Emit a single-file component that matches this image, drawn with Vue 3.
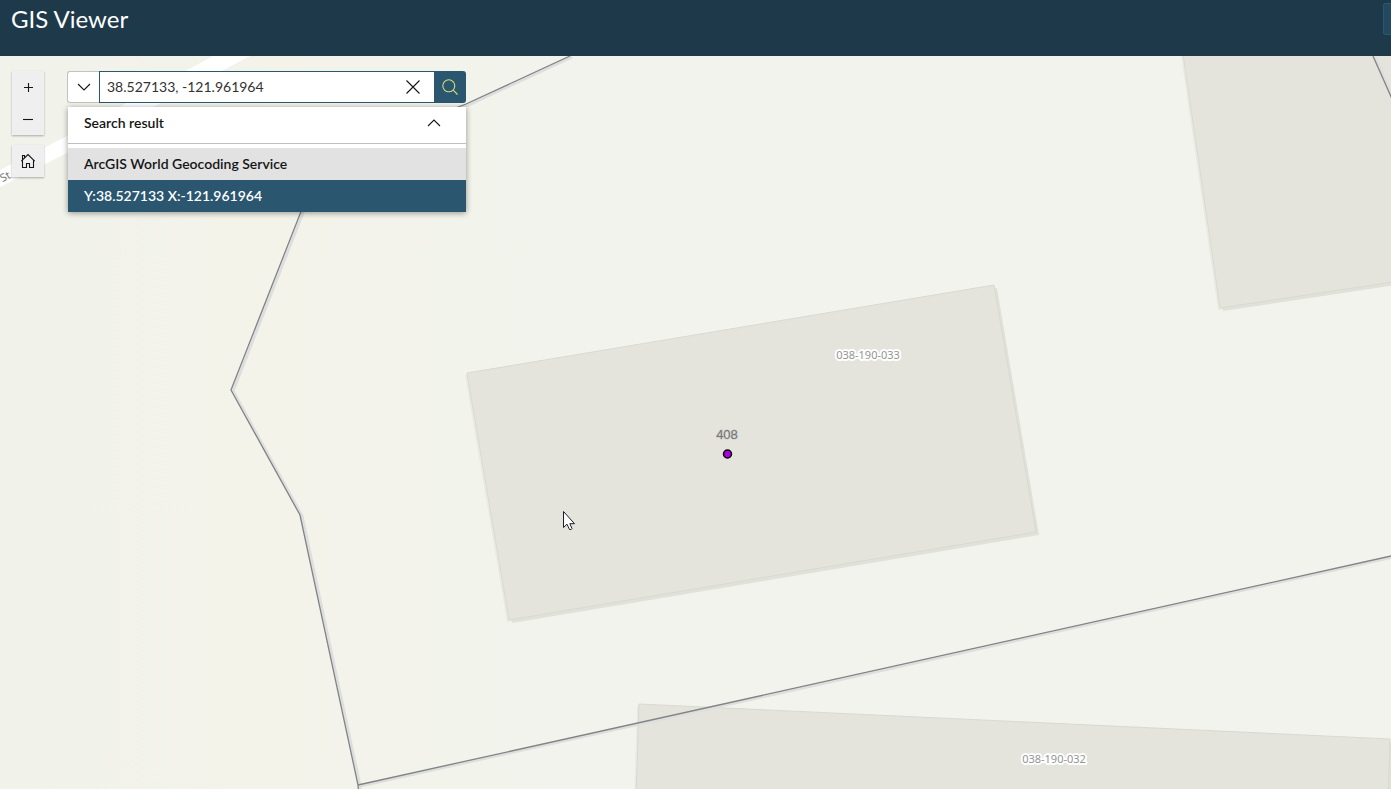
<script setup>
import { ref } from 'vue';

const query = ref('38.527133, -121.961964');
const expanded = ref(true);

const buildings = [
    '1181,40 1220,308 1400,281 1400,40',
    '467,373 994,285 1036,532 509,620',
    '639,704 1390,739 1388,800 636,800',
];

const parcels = [
    '570,56 466,104 322,158 231,390 300,515 358,785 359,800',
    '358,785 1400,554',
    '1373,56 1400,117',
];

const labels = [
    { text: '038-190-033', x: 868, y: 359 },
    { text: '038-190-032', x: 1054, y: 763 },
];

const clearQuery = () => {
    query.value = '';
};
</script>

<template>
    <div class="viewer">
        <header class="header">
            <h1 class="title">GIS Viewer</h1>
            <button type="button" class="header-button" aria-label="Menu"></button>
        </header>

        <main class="map">
            <svg class="canvas" viewBox="0 56 1391 733" preserveAspectRatio="xMinYMin slice">
                <defs>
                    <linearGradient id="ground" x1="0" x2="1" y1="0" y2="0">
                        <stop offset="0" stop-color="#f1f2ea" />
                        <stop offset="0.2" stop-color="#f3f3ea" />
                        <stop offset="0.4" stop-color="#f2f3ec" />
                        <stop offset="1" stop-color="#f2f3ec" />
                    </linearGradient>
                </defs>
                <rect x="0" y="56" width="1391" height="733" fill="url(#ground)" />
                <polygon points="213,56 250,56 157,105 67,153 0,187 0,170 67,136 123,105" fill="#fff" />
                <text class="street" transform="translate(7 180) rotate(-28)">St</text>

                <g v-for="points in buildings" :key="points">
                    <polygon :points="points" fill="#e9eae2" transform="translate(-2 2)" />
                    <polygon :points="points" fill="#e0e1d9" transform="translate(3 3)" />
                    <polygon :points="points" fill="#e4e4dc" stroke="#d8d9d1" />
                </g>

                <g fill="none">
                    <polyline v-for="points in parcels" :key="points" :points="points" stroke="#dddede" stroke-width="3" transform="translate(2 1)" />
                    <polyline v-for="points in parcels" :key="points" :points="points" stroke="#828384" stroke-width="1.3" />
                </g>

                <text v-for="label in labels" :key="label.text" class="parcel-label" :x="label.x" :y="label.y">{{ label.text }}</text>
                <text class="address" x="727" y="439">408</text>
                <circle cx="727.5" cy="454" r="4" fill="#a900e6" stroke="#000" stroke-width="1.5" />
                <path d="M563.5 511.5v16l3.5-3.3 2.5 5.3q2 .6 2.5-1l-2.2-4.8h4.7z" fill="#fff" stroke="#1b1b2b" />
            </svg>

            <div class="controls">
                <div class="tools">
                    <div class="tool-group">
                        <button type="button" class="tool" aria-label="Zoom in">
                            <svg width="16" height="16" viewBox="0 0 16 16"><path d="M8.5 4v9M4 8.5h9" /></svg>
                        </button>
                        <button type="button" class="tool" aria-label="Zoom out">
                            <svg width="16" height="16" viewBox="0 0 16 16"><path d="M3 8.5h10" /></svg>
                        </button>
                    </div>
                    <div class="tool-group">
                        <button type="button" class="tool" aria-label="Default map view">
                            <svg width="16" height="16" viewBox="0 0 16 16"><path d="M1.3 8.2 8 1.5l6.7 6.7M2.5 7.5v7h4v-4h3v4h4v-7M2.5 6.5v-4h2v2" /></svg>
                        </button>
                    </div>
                </div>

                <div class="search">
                    <form class="search-bar" @submit.prevent="expanded = true">
                        <button type="button" class="source" aria-label="Search in">
                            <svg width="16" height="16" viewBox="0 0 16 16"><path d="m2 5 6 6 6-6" /></svg>
                        </button>
                        <div class="field">
                            <input v-model="query" type="text" class="query" aria-label="Search" />
                            <button type="button" class="clear" aria-label="Clear search" @click="clearQuery">
                                <svg width="16" height="16" viewBox="0 0 16 16"><path d="m1.5 1.5 13 13m0-13-13 13" /></svg>
                            </button>
                        </div>
                        <button type="submit" class="submit" aria-label="Search">
                            <svg width="16" height="16" viewBox="0 0 16 16"><circle cx="6.8" cy="6.8" r="6" /><path d="m11.2 11.2 4.3 4.3" /></svg>
                        </button>
                    </form>

                    <div class="results">
                        <button type="button" class="results-header" :aria-expanded="expanded" @click="expanded = !expanded">
                            <span>Search result</span>
                            <svg width="16" height="16" viewBox="0 0 16 16"><path d="m2 12 6-6 6 6" /></svg>
                        </button>
                        <template v-if="expanded">
                            <h2 class="results-source">ArcGIS World Geocoding Service</h2>
                            <button type="button" class="result">Y:38.527133 X:-121.961964</button>
                        </template>
                    </div>
                </div>
            </div>
        </main>
    </div>
</template>

<style>
body{margin:0}
</style>

<style scoped>
.viewer{display:flex;flex-direction:column;height:100vh;overflow:hidden;font-family:Lato,"Open Sans",sans-serif;font-size:14px;color:#151515}
.viewer *{box-sizing:border-box}
button{display:flex;align-items:center;justify-content:center;margin:0;padding:0;border:0;font:inherit;color:inherit;cursor:pointer}
button svg{flex:none;fill:none;stroke:#151515;stroke-width:1.1}

.header{display:flex;align-items:flex-start;justify-content:space-between;flex:none;height:56px;padding-left:11px;overflow:hidden;background:#1d394a;color:#fff}
.title{margin:0;font-size:24px;font-weight:400;line-height:38px}
.header-button{width:32px;height:32px;margin:3px -24px 0 0;border:1px solid #2a566f;border-radius:2px;background:#24485d}

.map{position:relative;flex:1;min-height:0;overflow:hidden;background:#f2f3ec}
.canvas{position:absolute;top:0;left:0;width:100%;height:100%}
.street{font:11px "Noto Sans",sans-serif;fill:#777;text-anchor:middle}
.parcel-label{font:11px "Noto Sans",sans-serif;fill:#949494;stroke:#fff;stroke-width:4px;stroke-linejoin:round;paint-order:stroke;text-anchor:middle}
.address{font:13px "Liberation Sans",Arial,sans-serif;fill:#777;stroke:#c8c8c4;stroke-width:1px;paint-order:stroke;text-anchor:middle}

.controls{position:relative;display:flex;align-items:flex-start;gap:23px;padding:15px 12px}
.tools{display:flex;flex-direction:column;gap:10px}
.tool-group{background:#efefef;box-shadow:0 1px 2px rgba(0,0,0,.3)}
.tool{width:32px;height:32px;background:transparent}

.search{display:flex;flex-direction:column;gap:4px;flex:0 1 399px}
.search-bar{display:flex;height:32px}
.source{width:32px;border:1px solid #c2c2c2;border-right:0;border-radius:3px 0 0 3px;background:#fff}
.field{display:flex;flex:1;min-width:0;border:1px solid #2a566f;border-right:0;background:#fff}
.query{flex:1;min-width:0;padding:0 7px 2px;border:0;outline:0;background:transparent;color:#323232;font:14px Lato,sans-serif}
.clear{width:42px;background:transparent}
.submit{width:32px;border-radius:0 3px 3px 0;background:#2a566f}
.submit svg{stroke:#d3de79}

.results{margin-left:1px;background:#fff;box-shadow:0 1px 6px rgba(0,0,0,.4);font-weight:600}
.results-header{justify-content:space-between;width:100%;height:37px;margin-bottom:4px;padding:0 24px 6px 16px;border-bottom:1px solid #c0c0c0;background:#fff;text-align:left}
.results-source{margin:0;padding:0 16px;background:#e2e2e2;font-size:14px;font-weight:600;line-height:32px}
.result{justify-content:flex-start;width:100%;height:32px;padding:0 16px 2px;background:#2a566f;color:#fff}
</style>
